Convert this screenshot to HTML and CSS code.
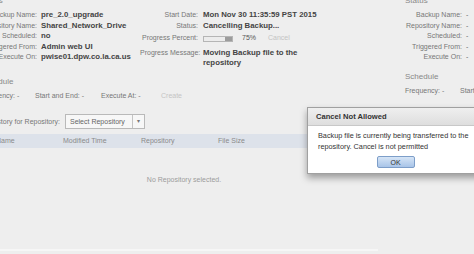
FILE: index.html
```html
<!DOCTYPE html>
<html lang="en">
<head>
    <meta charset="UTF-8">
    <meta name="viewport" content="width=device-width, initial-scale=1.0">
    <title>Backup Status</title>
    <link rel="stylesheet" href="styles.css">
</head>
<body>
    <div class="page">
        <section class="panel">
            <h2 class="section-title">Status</h2>
            <div class="status-row">
                <dl class="props props-main">
                    <dt>Backup Name:</dt><dd class="strong">pre_2.0_upgrade</dd>
                    <dt>Repository Name:</dt><dd class="strong">Shared_Network_Drive</dd>
                    <dt>Scheduled:</dt><dd class="strong">no</dd>
                    <dt>Triggered From:</dt><dd class="strong">Admin web UI</dd>
                    <dt>Execute On:</dt><dd class="strong">pwise01.dpw.co.la.ca.us</dd>
                </dl>
                <dl class="props props-progress">
                    <dt>Start Date:</dt><dd class="strong">Mon Nov 30 11:35:59 PST 2015</dd>
                    <dt>Status:</dt><dd class="strong">Cancelling Backup...</dd>
                    <dt class="row-progress">Progress Percent:</dt>
                    <dd class="row-progress">
                        <span class="progress"><span class="progress-fill" style="width: 75%"></span></span>
                        <span class="percent">75%</span>
                        <span class="link-disabled">Cancel</span>
                    </dd>
                    <dt class="row-message">Progress Message:</dt>
                    <dd class="row-message strong">Moving Backup file to the<br>repository</dd>
                </dl>
            </div>

            <h2 class="section-title schedule-title">Schedule</h2>
            <div class="schedule-row">
                <span>Frequency: -</span>
                <span>Start and End: -</span>
                <span>Execute At: -</span>
                <span class="link-disabled">Create</span>
            </div>

            <div class="filter-row">
                <label for="repoSelect">History for Repository:</label>
                <div class="select" id="repoSelect">
                    <span class="select-text">Select Repository</span>
                    <span class="select-button">&#9662;</span>
                </div>
            </div>

            <div class="history">
                <div class="history-head">
                    <span class="col col-name">Name</span>
                    <span class="col col-time">Modified Time</span>
                    <span class="col col-repo">Repository</span>
                    <span class="col">File Size</span>
                </div>
                <div class="history-body">
                    <p class="empty">No Repository selected.</p>
                </div>
            </div>
        </section>

        <section class="panel">
            <h2 class="section-title">Status</h2>
            <div class="status-row">
                <dl class="props props-main">
                    <dt>Backup Name:</dt><dd>-</dd>
                    <dt>Repository Name:</dt><dd>-</dd>
                    <dt>Scheduled:</dt><dd>-</dd>
                    <dt>Triggered From:</dt><dd>-</dd>
                    <dt>Execute On:</dt><dd>-</dd>
                </dl>
            </div>

            <h2 class="section-title schedule-title">Schedule</h2>
            <div class="schedule-row">
                <span>Frequency: -</span>
                <span>Start and End: -</span>
                <span>Execute At: -</span>
                <span class="link-disabled">Create</span>
            </div>
        </section>
    </div>

    <div class="dialog">
        <div class="dialog-title">Cancel Not Allowed</div>
        <div class="dialog-body">
            <p>Backup file is currently being transferred to the<br>repository. Cancel is not permitted</p>
            <button class="dialog-button">OK</button>
        </div>
    </div>
</body>
</html>
```

FILE: styles.css
```css
body {
    margin: 0;
    overflow: hidden;
    background-color: #eeeeee;
    font-family: "Liberation Sans", Arial, sans-serif;
    font-size: 7px;
    color: #777777;
}

.page {
    display: flex;
    margin-left: -22px;
    margin-top: -4px;
    width: 850px;
}

.panel {
    width: 425px;
    flex-shrink: 0;
}

.section-title {
    margin: 0 0 4px 2px;
    font-size: 8px;
    font-weight: normal;
    line-height: 10px;
    color: #888888;
}

.schedule-title {
    margin-top: 9.5px;
}

.status-row {
    display: flex;
}

.props {
    display: grid;
    margin: 0;
    line-height: 10.5px;
    white-space: nowrap;
}

.props dt {
    text-align: right;
}

.props dd {
    margin: 0;
    color: #666666;
}

.props-main {
    width: 162px;
    grid-template-columns: 59px auto;
    column-gap: 4px;
    align-content: start;
}

.props-progress {
    grid-template-columns: 58px auto;
    column-gap: 5px;
    align-content: start;
}

.strong {
    font-weight: bold;
    font-size: 7.8px;
    color: #444444 !important;
}

.row-progress {
    display: flex;
    align-items: center;
    justify-content: flex-end;
    height: 15px;
}

dd.row-progress {
    justify-content: flex-start;
}

.row-message {
    margin-top: 2px !important;
    line-height: 9.5px;
}

.progress {
    display: inline-block;
    width: 28px;
    height: 4px;
    border: 1px solid #b5b5b5;
    background-color: #9c9c9c;
}

.progress-fill {
    display: block;
    height: 100%;
    background-color: #ececec;
}

.percent {
    margin-left: 9px;
    color: #555555;
}

.link-disabled {
    color: #c4c4c4;
}

.dd-cancel {
    margin-left: 12px;
}

dd.row-progress .link-disabled {
    margin-left: 12px;
}

.schedule-row {
    display: grid;
    grid-template-columns: 55px 66px 60px auto;
    margin-top: 4px;
    padding-left: 2px;
    line-height: 10px;
    white-space: nowrap;
}

.filter-row {
    display: flex;
    align-items: center;
    gap: 5px;
    margin-top: 13px;
    padding-left: 2px;
}

.filter-row label {
    width: 80px;
    text-align: right;
    white-space: nowrap;
}

.select {
    display: flex;
    width: 80px;
    height: 15px;
    box-sizing: border-box;
    border: 1px solid #b9b9b9;
    background-color: #f7f7f7;
    color: #666666;
}

.select-text {
    flex-grow: 1;
    padding-left: 4px;
    line-height: 13px;
}

.select-button {
    width: 11px;
    border-left: 1px solid #c4c4c4;
    text-align: center;
    line-height: 13px;
    font-size: 6px;
    color: #777777;
}

.history {
    margin-top: 5px;
    margin-left: 12px;
    width: 388px;
}

.history-head {
    display: flex;
    height: 14px;
    line-height: 14px;
    background-color: #dde2ea;
    color: #8a8a8a;
}

.col {
    padding-left: 6px;
    white-space: nowrap;
}

.col-name {
    width: 61px;
}

.col-time {
    width: 72px;
}

.col-repo {
    width: 71px;
}

.history-body {
    height: 103px;
    box-sizing: border-box;
    padding-top: 27px;
    border-bottom: 2px solid #f6f6f6;
}

.empty {
    margin: 0;
    text-align: center;
    line-height: 10px;
    color: #9c9c9c;
}

.dialog {
    position: absolute;
    left: 307px;
    top: 107px;
    width: 175px;
    border: 1px solid #a0a0a0;
    background-color: #ffffff;
    box-shadow: 0 4px 7px rgba(0, 0, 0, 0.35);
    color: #333333;
}

.dialog-title {
    height: 17px;
    line-height: 17px;
    padding-left: 8px;
    border-bottom: 1px solid #c8c8c8;
    background: linear-gradient(#efefef, #dedede);
    font-size: 7.6px;
    font-weight: bold;
}

.dialog-body {
    display: flex;
    flex-direction: column;
    align-items: center;
    padding: 4px 0 5px;
}

.dialog-body p {
    align-self: stretch;
    margin: 0 0 4px;
    padding-left: 10px;
    line-height: 11px;
    font-size: 7.3px;
}

.dialog-button {
    width: 38px;
    height: 12px;
    padding: 0;
    border: 1px solid #7d9ec9;
    border-radius: 2px;
    background: linear-gradient(#d6e5f6, #a8c4e8);
    font-family: inherit;
    font-size: 7px;
    color: #333333;
}
```
